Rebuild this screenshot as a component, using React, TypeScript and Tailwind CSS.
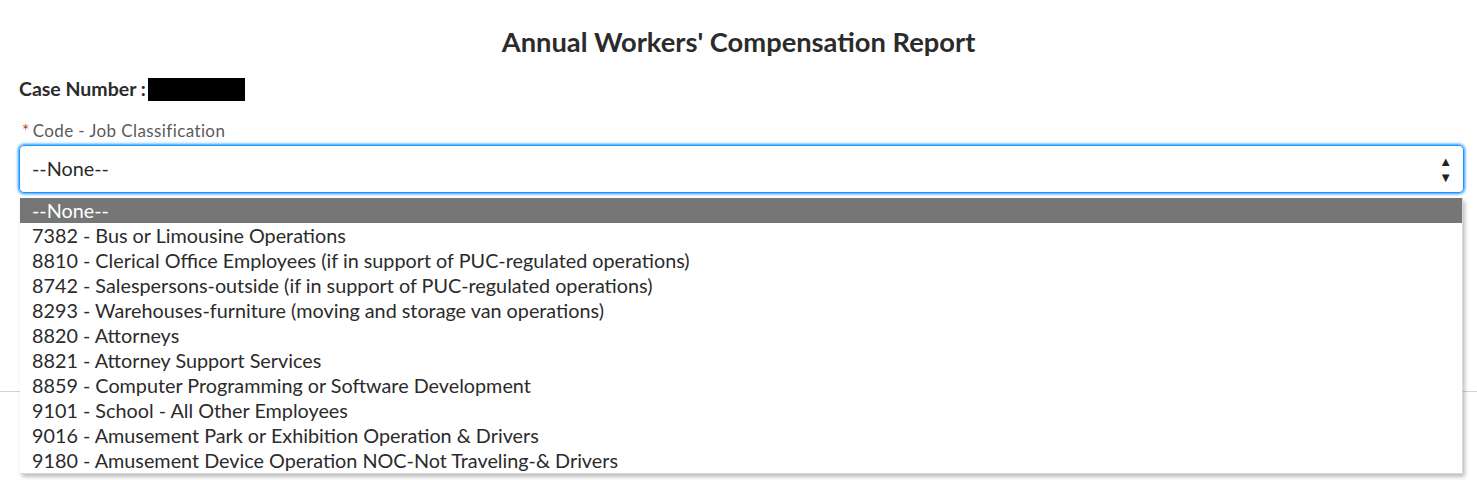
import React from "react";

const options = [
  "--None--",
  "7382 - Bus or Limousine Operations",
  "8810 - Clerical Office Employees (if in support of PUC-regulated operations)",
  "8742 - Salespersons-outside (if in support of PUC-regulated operations)",
  "8293 - Warehouses-furniture (moving and storage van operations)",
  "8820 - Attorneys",
  "8821 - Attorney Support Services",
  "8859 - Computer Programming or Software Development",
  "9101 - School - All Other Employees",
  "9016 - Amusement Park or Exhibition Operation & Drivers",
  "9180 - Amusement Device Operation NOC-Not Traveling-& Drivers",
];

export default function App() {
  return (
    <div
      className="w-full h-[480px] overflow-hidden bg-white text-[#333333]"
      style={{ fontFamily: "Lato, 'Open Sans', sans-serif" }}
    >
      <h1 className="pt-[26px] text-center text-[27.3px] leading-[32px] font-bold text-[#2b2b2b]">
        Annual Workers' Compensation Report
      </h1>
      <div className="px-[19px]">
        <div className="mt-[19px] flex items-center text-[19.5px] leading-[24px] font-bold text-[#2b2b2b]">
          <span>Case Number :</span>
          <span className="ml-[2px] inline-block w-[97px] h-[23px] bg-black" />
        </div>
        <div className="mt-[20px] text-[17px] tracking-[0.4px] leading-[20px] flex items-center">
          <span className="text-[#c23934] ml-[3px] mr-[3px] text-[17px]">*</span>
          <span className="text-[#5a5a5a]">Code - Job Classification</span>
        </div>
        <div className="relative mt-[4px]">
          <div className="h-[48px] w-[1445px] rounded-[5px] border border-[#1b96ff] shadow-[0_0_3px_1px_#1b96ff] flex items-center justify-between pl-[12px] pr-[11px] text-[19.8px] text-[#2b2b2b]">
            <span>--None--</span>
            <span className="flex flex-col items-center text-[13px] leading-[16px] text-[#222]">
              <span>▲</span>
              <span>▼</span>
            </span>
          </div>
          <div className="absolute left-[1px] top-[53px] w-[1443px] bg-white shadow-[2px_3px_4px_rgba(0,0,0,0.25)] border-r border-b border-[#d8d8d8] z-10">
            {options.map((o, i) => (
              <div
                key={i}
                className={
                  "h-[25px] pl-[12px] text-[19.8px] leading-[25px] whitespace-nowrap " +
                  (i === 0 ? "bg-[#767676] text-white" : "text-[#2b2b2b]")
                }
              >
                {o}
              </div>
            ))}
          </div>
        </div>
      </div>
      <div className="mt-[198px] border-t border-[#d4d4d4]" />
    </div>
  );
}
